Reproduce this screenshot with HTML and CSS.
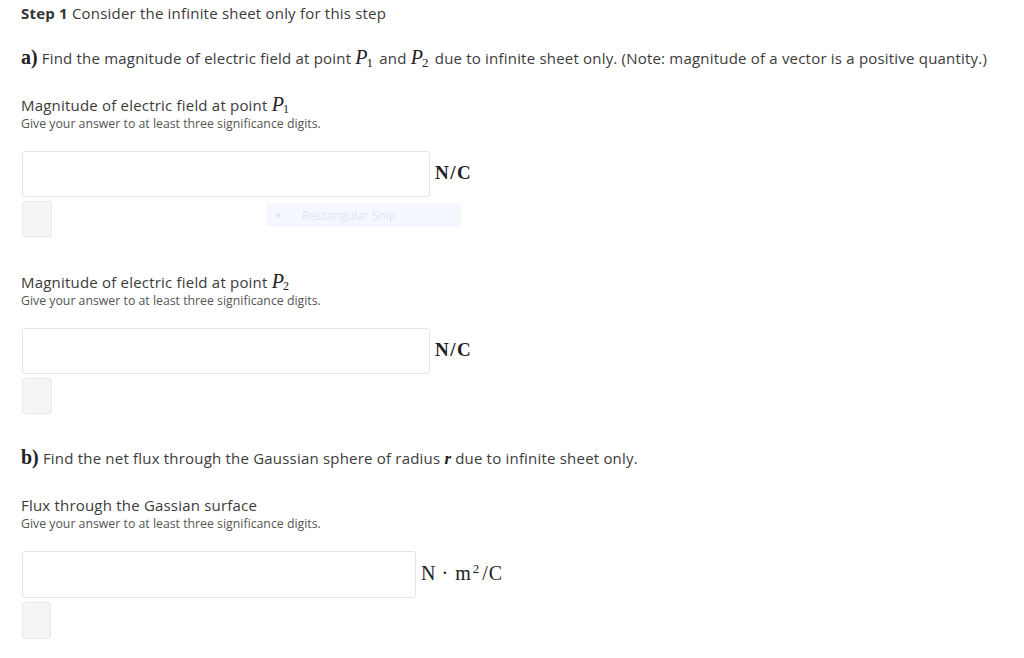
FILE: index.html
```html
<!DOCTYPE html>
<html>
<head>
<meta charset="utf-8">
<link rel="stylesheet" href="styles.css">
</head>
<body>
<div class="page">
  <p class="step"><b>Step 1</b> Consider the infinite sheet only for this step</p>
  <p class="part"><span class="mb">a)</span> Find the magnitude of electric field at point <span class="mi">P</span><sub class="ms">1</sub> and <span class="mi">P</span><sub class="ms">2</sub> due to infinite sheet only. (Note: magnitude of a vector is a positive quantity.)</p>

  <div class="field f1">
    <div class="label">Magnitude of electric field at point <span class="mi">P</span><sub class="ms">1</sub></div>
    <div class="hint">Give your answer to at least three significance digits.</div>
    <div class="row">
      <div class="input w1"></div>
      <span class="unit"><b>N/C</b></span>
    </div>
    <div class="sqrow">
      <div class="sq"></div>
      <div class="snip"><span class="dot"></span><span class="sniptext">Rectangular Snip</span></div>
    </div>
  </div>

  <div class="field f2">
    <div class="label">Magnitude of electric field at point <span class="mi">P</span><sub class="ms">2</sub></div>
    <div class="hint">Give your answer to at least three significance digits.</div>
    <div class="row">
      <div class="input w1"></div>
      <span class="unit"><b>N/C</b></span>
    </div>
    <div class="sqrow"><div class="sq"></div></div>
  </div>

  <p class="part partb"><span class="mb">b)</span> Find the net flux through the Gaussian sphere of radius <span class="mr">r</span> due to infinite sheet only.</p>

  <div class="field f3">
    <div class="label">Flux through the Gassian surface</div>
    <div class="hint">Give your answer to at least three significance digits.</div>
    <div class="row">
      <div class="input w3"></div>
      <span class="unit unit3">N<span class="cdot">·</span>m<sup class="sup">2</sup>/C</span>
    </div>
    <div class="sqrow"><div class="sq sq3"></div></div>
  </div>
</div>
</body>
</html>
```
FILE: styles.css
```css
html, body {
  margin: 0;
  padding: 0;
  background: #ffffff;
}
.page {
  padding: 3px 0 0 21px;
  font-family: "Open Sans", "Noto Sans", sans-serif;
  color: #3b3b3b;
  font-size: 15px;
  letter-spacing: 0.2px;
}
p { margin: 0; }
.step {
  line-height: 20px;
}
.step b { font-weight: 700; color: #333; }
.part {
  margin-top: 22px;
  line-height: 24px;
}
.mb {
  font-family: "Liberation Serif", "DejaVu Serif", serif;
  font-weight: 700;
  font-size: 20px;
  color: #222;
  letter-spacing: 0;
}
.mi, .mr {
  font-family: "Liberation Serif", "DejaVu Serif", serif;
  font-style: italic;
  font-size: 20px;
  color: #222;
  letter-spacing: 0;
}
.mr { font-weight: 700; font-size: 17px; }
.ms {
  font-family: "Liberation Serif", "DejaVu Serif", serif;
  font-size: 13px;
  color: #222;
  vertical-align: -3px;
  line-height: 0;
  margin-left: -1px;
  margin-right: 2px;
}
.label .ms { font-size: 12px; vertical-align: -2px; }
.f1 { margin-top: 24px; }
.f2 { margin-top: 34px; }
.label {
  line-height: 20px;
}
.hint {
  font-size: 12.3px;
  line-height: 16px;
  color: #555;
  letter-spacing: 0;
  margin-top: 1px;
}
.row {
  display: flex;
  align-items: center;
  margin-top: 19px;
}
.input {
  height: 44px;
  border: 1px solid #e4e4e4;
  border-radius: 3px;
  background: #fff;
  margin-left: 1px;
}
.w1 { width: 406px; }
.w3 { width: 392px; }
.unit {
  font-family: "Liberation Serif", "DejaVu Serif", serif;
  font-size: 19px;
  color: #222;
  margin-left: 5px;
  margin-top: -2px;
  letter-spacing: 1.5px;
}
.unit b { font-weight: 700; }
.unit3 { font-weight: 400; font-size: 20px; margin-left: 5px; letter-spacing: 1px; }
.cdot { margin: 0 6px 0 5px; }
.sup { font-size: 13px; vertical-align: 7px; line-height: 0; margin-left: 1px; margin-right: 2px; }
.sqrow {
  display: flex;
  align-items: flex-start;
  margin-top: 4px;
}
.sq {
  width: 28px;
  height: 34px;
  margin-left: 1px;
  border: 1px solid #e9e7eb;
  border-radius: 3px;
  background: #f6f4f7;
}
.sq3 { width: 27px; height: 35px; }
.snip {
  margin-left: 214px;
  margin-top: 2px;
  width: 195px;
  height: 24px;
  background: #f5f8fe;
  display: flex;
  align-items: center;
  font-size: 12px;
  color: #e1e5ee;
  letter-spacing: 0;
}
.dot {
  width: 5px;
  height: 5px;
  border-radius: 50%;
  background: #e6e9ef;
  margin-left: 10px;
  margin-right: 21px;
}
.partb { margin-top: 31px; }
.f3 { margin-top: 24px; }
.f3 .row { margin-top: 19px; }
.f3 .input { height: 45px; }
.f3 .sqrow { margin-top: 4px; }
```
